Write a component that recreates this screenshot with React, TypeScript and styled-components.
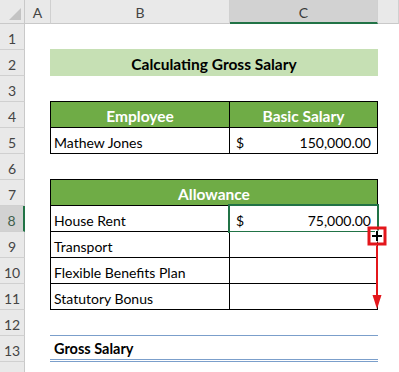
import styled, { createGlobalStyle, css } from "styled-components"

const GlobalStyle = createGlobalStyle`
  html, body {
    margin: 0;
    padding: 0;
    background: #fff;
  }
  body {
    font-family: Lato, "Open Sans", Arial, sans-serif;
    color: #000;
  }
`

const green = "#217346"
const blue = "#7B9FCB"

const Sheet = styled.div`
  position: relative;
  width: 399px;
  height: 372px;
  overflow: hidden;
  display: grid;
  grid-template-columns: 25px 26px 179px 148px 1fr;
  grid-template-rows: 24px repeat(14, 26px);
  background: #fff;
`

const Corner = styled.div`
  grid-row: 1;
  grid-column: 1;
  box-sizing: border-box;
  background: #e9e9e9;
  border-right: 1px solid #c9c9c9;
  border-bottom: 1px solid #c9c9c9;
  position: relative;

  &:after {
    content: '';
    position: absolute;
    right: 3px;
    bottom: 3px;
    width: 0;
    height: 0;
    border-left: 12px solid transparent;
    border-bottom: 12px solid #c3c3c3;
  }
`

const ColHead = styled.div<{ $sel?: boolean }>`
  grid-row: 1;
  box-sizing: border-box;
  background: #e9e9e9;
  border-right: 1px solid #d0d0d0;
  border-bottom: 1px solid #c9c9c9;
  display: flex;
  align-items: center;
  justify-content: center;
  font-size: 14px;
  color: #444;
  padding-top: 2px;

  ${({ $sel }) => $sel && css`
    background: #d2d2d2;
    border-bottom: 2px solid ${green};
    color: #3a3a3a;
  `}
`

const RowHead = styled.div<{ $sel?: boolean }>`
  grid-column: 1;
  box-sizing: border-box;
  background: #e9e9e9;
  border-right: 1px solid #c9c9c9;
  border-bottom: 1px solid #d0d0d0;
  display: flex;
  align-items: center;
  justify-content: center;
  font-size: 14px;
  color: #444;
  padding-top: 3px;

  ${({ $sel }) => $sel && css`
    background: #d2d2d2;
    border-right: 2px solid ${green};
    color: #3f5f4c;
  `}
`

const Title = styled.div`
  grid-row: 3;
  grid-column: 3 / 5;
  margin: -1px 0 0 -1px;
  background: #c6e0b4;
  display: flex;
  align-items: center;
  justify-content: center;
  font-weight: 700;
  font-size: 15.5px;
  padding-top: 2px;
`

const Table = styled.div<{ $rows: string }>`
  grid-row: ${({ $rows }) => $rows};
  grid-column: 3 / 5;
  margin: -1px 0 0 -1px;
  display: grid;
  grid-template-columns: 178px 1fr;
  grid-auto-rows: 25px;
  gap: 1px;
  padding: 1px;
  background: #000;
`

const HeadCell = styled.div<{ $span?: boolean }>`
  grid-column: ${({ $span }) => ($span ? "1 / 3" : "auto")};
  background: #6fac46;
  color: #fff;
  font-weight: 700;
  font-size: 15.5px;
  display: flex;
  align-items: center;
  justify-content: center;
  padding-top: 2px;
`

const Cell = styled.div`
  background: #fff;
  font-size: 14px;
  display: flex;
  align-items: center;
  padding: 3px 0 0 3px;
`

const Amount = styled.div<{ $active?: boolean }>`
  position: relative;
  background: #fff;
  font-size: 14px;
  display: flex;
  align-items: center;
  justify-content: space-between;
  padding: 3px 6px 0 6px;

  ${({ $active }) => $active && css`
    &:after {
      content: '';
      position: absolute;
      inset: -2px;
      border: 2px solid ${green};
      pointer-events: none;
    }
  `}
`

const Gross = styled.div`
  grid-row: 14;
  grid-column: 3 / 5;
  margin: -1px 0 0 -1px;
  border-top: 1px solid ${blue};
  border-bottom: 3px double ${blue};
  display: flex;
  align-items: center;
  padding: 2px 0 0 4px;
  font-weight: 700;
  font-size: 14.5px;
`

const Overlay = styled.svg`
  position: absolute;
  left: 360px;
  top: 220px;
  pointer-events: none;
`

const cols = ["A", "B", "C", ""]
const rows = Array.from({ length: 14 }, (_, i) => i + 1)

export default function App() {
  return <>
    <GlobalStyle />
    <Sheet>
      <Corner />
      {cols.map((c, i) => (
        <ColHead key={i} $sel={c === "C"} style={{ gridColumn: i + 2 }}>{c}</ColHead>
      ))}
      {rows.map(r => (
        <RowHead key={r} $sel={r === 8} style={{ gridRow: r + 1 }}>{r < 14 ? r : ""}</RowHead>
      ))}

      <Title>Calculating Gross Salary</Title>

      <Table $rows="5 / 7">
        <HeadCell>Employee</HeadCell>
        <HeadCell>Basic Salary</HeadCell>
        <Cell>Mathew Jones</Cell>
        <Amount><span>$</span><span>150,000.00</span></Amount>
      </Table>

      <Table $rows="8 / 13">
        <HeadCell $span>Allowance</HeadCell>
        <Cell>House Rent</Cell>
        <Amount $active><span>$</span><span>75,000.00</span></Amount>
        <Cell>Transport</Cell>
        <Amount />
        <Cell>Flexible Benefits Plan</Cell>
        <Amount />
        <Cell>Statutory Bonus</Cell>
        <Amount />
      </Table>

      <Gross>Gross Salary</Gross>

      <Overlay width="30" height="92" viewBox="0 0 30 92">
        <rect x="9" y="8" width="16" height="16" fill="none" stroke="#e3161b" strokeWidth="3" />
        <path d="M17 10.5v11M11.5 16h11" stroke="#fff" strokeWidth="4" />
        <path d="M17 11v10M12 16h10" stroke="#000" strokeWidth="2" />
        <path d="M17 25.5v51" stroke="#e3161b" strokeWidth="2" />
        <path d="M12.5 75h9l-4.5 14z" fill="#e3161b" />
      </Overlay>
    </Sheet>
  </>
}
